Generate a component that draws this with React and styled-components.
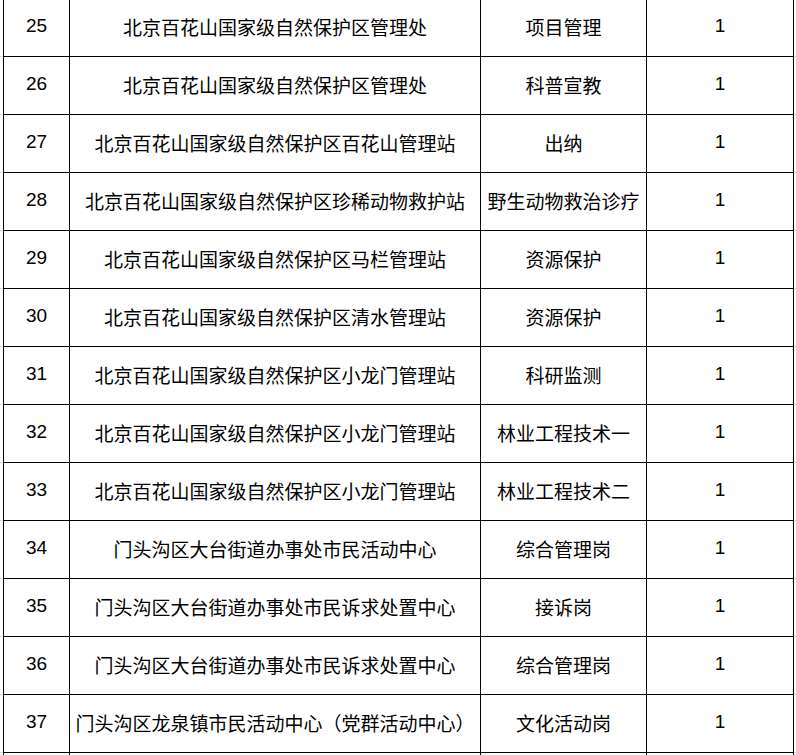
import React from "react";
import styled, { createGlobalStyle } from "styled-components";

const Global = createGlobalStyle`
  html, body {
    margin: 0;
    padding: 0;
    background-color: #fff;
  }
  body {
    background-image: repeating-linear-gradient(
      to bottom,
      transparent 0px,
      transparent 56px,
      #d4d4d4 56px,
      #d4d4d4 57px,
      transparent 57px,
      transparent 58px
    );
    font-family: "Liberation Sans", "Noto Sans CJK SC", sans-serif;
    height: 755px;
    overflow: hidden;
  }
`;

const Page = styled.div`
  padding-left: 3px;
  margin-top: -2px;
`;

const Table = styled.table`
  border-collapse: collapse;
  table-layout: fixed;
  width: 790px;
  background: #fff;
`;

const Col = styled.col`
  width: ${(p) => p.$w}px;
`;

const Row = styled.tr`
  height: 58px;
`;

const Cell = styled.td`
  border: 1px solid #000;
  padding: 0 0 3px 0;
  text-align: center;
  vertical-align: middle;
  font-size: 19px;
  color: #000;
  white-space: nowrap;
  overflow: hidden;
`;

const widths = [66, 411, 166, 147];

const rows = [
  [25, "北京百花山国家级自然保护区管理处", "项目管理", 1],
  [26, "北京百花山国家级自然保护区管理处", "科普宣教", 1],
  [27, "北京百花山国家级自然保护区百花山管理站", "出纳", 1],
  [28, "北京百花山国家级自然保护区珍稀动物救护站", "野生动物救治诊疗", 1],
  [29, "北京百花山国家级自然保护区马栏管理站", "资源保护", 1],
  [30, "北京百花山国家级自然保护区清水管理站", "资源保护", 1],
  [31, "北京百花山国家级自然保护区小龙门管理站", "科研监测", 1],
  [32, "北京百花山国家级自然保护区小龙门管理站", "林业工程技术一", 1],
  [33, "北京百花山国家级自然保护区小龙门管理站", "林业工程技术二", 1],
  [34, "门头沟区大台街道办事处市民活动中心", "综合管理岗", 1],
  [35, "门头沟区大台街道办事处市民诉求处置中心", "接诉岗", 1],
  [36, "门头沟区大台街道办事处市民诉求处置中心", "综合管理岗", 1],
  [37, "门头沟区龙泉镇市民活动中心（党群活动中心）", "文化活动岗", 1],
  ["", "", "", ""],
];

export default function App() {
  return (
    <>
      <Global />
      <Page>
        <Table>
          <colgroup>
            {widths.map((w, i) => (
              <Col key={i} $w={w} />
            ))}
          </colgroup>
          <tbody>
            {rows.map((r, i) => (
              <Row key={i}>
                {r.map((c, j) => (
                  <Cell key={j}>{c}</Cell>
                ))}
              </Row>
            ))}
          </tbody>
        </Table>
      </Page>
    </>
  );
}
